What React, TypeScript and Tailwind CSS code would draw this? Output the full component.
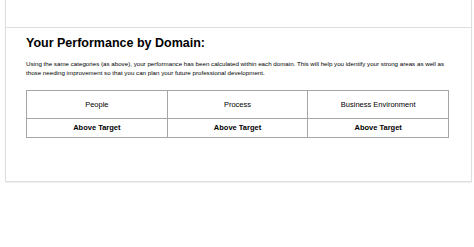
const domains = ["People", "Process", "Business Environment"];

export default function App() {
  return (
    <div className="h-[247px] w-[474px] bg-white" style={{ fontFamily: '"Liberation Sans", Arial, sans-serif' }}>
      <div className="ml-[5px] w-[467px] border-x border-b border-[#dedede] shadow-[0_1px_1px_rgba(0,0,0,0.05)]">
        <div className="h-[28px] border-b border-[#dedede]" />
        <div className="px-[20px] pt-[8px] pb-[43px]">
          <h2 className="text-[12.5px] font-bold leading-[14px] text-black">Your Performance by Domain:</h2>
          <p className="mt-[9px] text-[6.2px] leading-[9px] text-black">
            Using the same categories (as above), your performance has been calculated within each domain. This will help you identify your strong areas as well as those needing improvement so that you can plan your future professional development.
          </p>
          <table className="mt-[13px] w-[423px] table-fixed border-collapse text-[7.5px] text-black">
            <tbody>
              <tr className="h-[28px]">
                {domains.map((d) => (
                  <td key={d} className="border border-[#a6a6a6] text-center">{d}</td>
                ))}
              </tr>
              <tr className="h-[19px]">
                {domains.map((d) => (
                  <td key={d} className="border border-[#a6a6a6] text-center font-bold">Above Target</td>
                ))}
              </tr>
            </tbody>
          </table>
        </div>
      </div>
    </div>
  );
}
